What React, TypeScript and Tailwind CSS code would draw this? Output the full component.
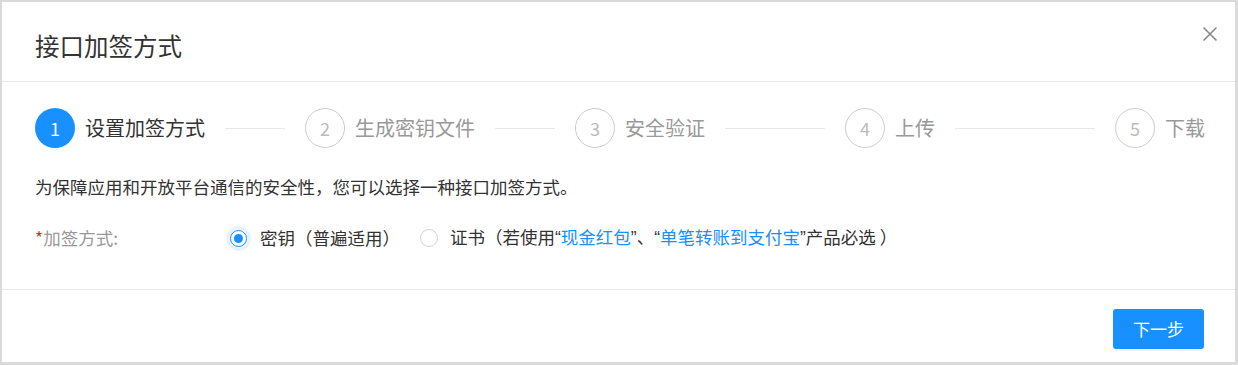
import React from "react";

const steps = ["设置加签方式", "生成密钥文件", "安全验证", "上传", "下载"];

function Step({ n, label, active, last }: { n: number; label: string; active: boolean; last: boolean }) {
  return (
    <div className={last ? "flex flex-none items-center" : "flex flex-1 items-center"}>
      <div
        className={
          active
            ? "flex h-10 w-10 shrink-0 items-center justify-center rounded-full bg-[#1890ff] text-[18px] text-white"
            : "flex h-10 w-10 shrink-0 items-center justify-center rounded-full border border-[#cccccc] text-[18px] text-[#bbbbbb]"
        }
      >
        {n}
      </div>
      <div className={active ? "ml-[10px] whitespace-nowrap text-[20px] text-[#333333]" : "ml-[10px] whitespace-nowrap text-[20px] text-[#999999]"}>
        {label}
      </div>
      {!last && <div className="mx-[20px] h-px flex-1 bg-[#e8e8e8]" />}
    </div>
  );
}

// narrow curly quotes as in the reference
function Q({ c }: { c: string }) {
  return <span style={{ fontFamily: '"Liberation Sans", sans-serif' }}>{c}</span>;
}

export default function App() {
  return (
    <div
      className="h-[365px] w-[1238px] bg-[#dadada] pb-[3px] pl-[2px] pr-[3px] pt-[2px]"
      style={{ fontFamily: '"Noto Sans CJK SC", "Noto Sans", sans-serif' }}
    >
      <div className="flex h-full flex-col bg-white">
        {/* header */}
        <div className="flex h-[80px] shrink-0 justify-between border-b border-[#e8e8e8] pl-[33px] pr-[17px]">
          <h1 className="pt-[28px] text-[24.5px] leading-[32px] text-[#333333]">接口加签方式</h1>
          <button className="mt-[24px] h-[16px] w-[16px] text-[#888888]">
            <svg viewBox="0 0 16 16" width="16" height="16" fill="none" stroke="currentColor" strokeWidth="1.6">
              <path d="M1.5 1.5 14.5 14.5M14.5 1.5 1.5 14.5" />
            </svg>
          </button>
        </div>

        {/* body */}
        <div className="flex-1 pl-[33px] pr-[30px] pt-[26px]">
          <div className="flex items-center">
            {steps.map((s, i) => (
              <Step key={s} n={i + 1} label={s} active={i === 0} last={i === steps.length - 1} />
            ))}
          </div>

          <p className="mt-[27px] text-[17.5px] leading-[24px] text-[#333333]">
            为保障应用和开放平台通信的安全性，您可以选择一种接口加签方式。
          </p>

          <div className="mt-[23px] flex h-[32px] items-center text-[17.5px]">
            <div className="w-[195px] text-[#999999]">
              <span className="text-[#f5222d]">*</span>加签方式:
            </div>
            <label className="flex items-center">
              <span className="flex h-[17px] w-[17px] items-center justify-center rounded-full border border-[#1890ff] shadow-[0_0_0_4px_rgba(24,144,255,0.1)]">
                <span className="h-[9px] w-[9px] rounded-full bg-[#1890ff]" />
              </span>
              <span className="ml-[13px] text-[#333333]">密钥（普遍适用）</span>
            </label>
            <label className="ml-[20px] flex items-center">
              <span className="h-[18px] w-[18px] rounded-full border border-[#d4d4d4]" />
              <span className="ml-[12px] text-[#333333]">
                证书（若使用<Q c="“" />
                <span className="text-[#1890ff]">现金红包</span>
                <Q c="”" />、<Q c="“" />
                <span className="text-[#1890ff]">单笔转账到支付宝</span>
                <Q c="”" />产品必选 ）
              </span>
            </label>
          </div>
        </div>

        {/* footer */}
        <div className="flex h-[73px] shrink-0 justify-end border-t border-[#e8e8e8] pr-[31px] pt-[19px]">
          <button className="h-[40px] w-[91px] rounded-[3px] bg-[#1890ff] text-[17px] text-white shadow-[0_2px_0_rgba(0,0,0,0.035)]">
            下一步
          </button>
        </div>
      </div>
    </div>
  );
}
